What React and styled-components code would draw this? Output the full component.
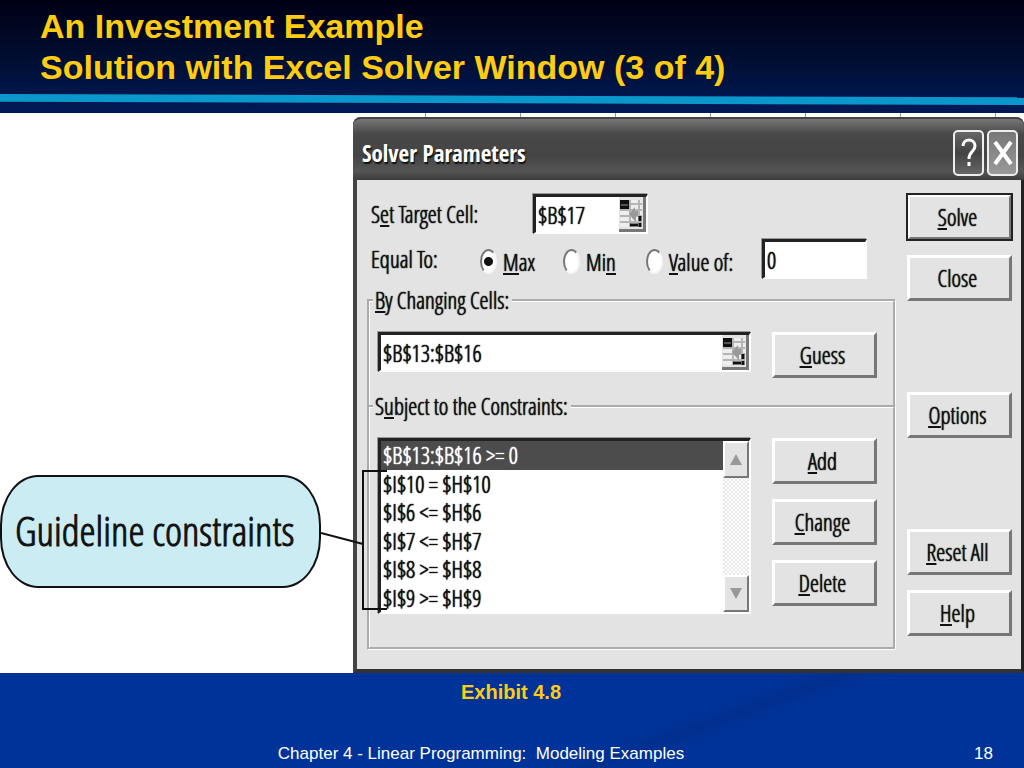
import styled, { createGlobalStyle, css } from "styled-components"
import { useState } from "react"

const narrow = `"Open Sans Condensed Light", "Arial Narrow", "Liberation Sans", sans-serif`
const narrowBold = `"Open Sans Condensed", "Arial Narrow", "Liberation Sans", sans-serif`
const face = "#e3e3e3"
const gold = "#ffcc11"

const GlobalStyle = createGlobalStyle`
    * {
        box-sizing: border-box;
    }
    body {
        margin: 0;
        background-color: #003399;
        font-family: "Liberation Sans", Arial, sans-serif;
    }
`
const Slide = styled.div`
    min-height: 100vh;
    display: flex;
    flex-direction: column;
    background: linear-gradient(160deg, transparent 62%, #002f8e 66%, transparent 70%) bottom / 100% 95px no-repeat, #003399;
`
const Header = styled.header`
    display: flex;
    flex-direction: column;
    height: 113px;
    padding-top: 6px;
    background: linear-gradient(#000014, #000c2c 45%, #001a58);
`
const Title = styled.h1`
    flex: 1;
    margin: 0;
    padding-left: 40px;
    font-size: 34px;
    line-height: 41px;
    font-weight: 700;
    color: ${gold};
`
const Stripe = styled.div`
    height: 11px;
    margin-bottom: 8px;
    background-color: #0a98cc;
    clip-path: polygon(0 0, 100% 30%, 100% 100%, 0 70%);
`
const Figure = styled.main`
    display: grid;
    grid-template-columns: minmax(0, 353fr) minmax(0, 671fr);
    background-color: white;
`
const Notes = styled.div`
    padding: 362px 32px 0 0;
`
const Callout = styled.div`
    height: 113px;
    display: flex;
    align-items: center;
    padding: 0 0 4px 13px;
    border: 2px solid #111;
    border-radius: 38px / 50px;
    background-color: #cbecf3;
    font-family: ${narrow};
    font-size: 41px;
    white-space: nowrap;
    color: #111;
    -webkit-text-stroke: 1px #111;
`
const SheetEdge = styled.div`
    padding-top: 4px;
    background: repeating-linear-gradient(90deg, #fff 0 72px, #99a 72px 73px, #fff 73px 95px) 0 0 / 100% 4px no-repeat;
`
const Dialog = styled.section`
    position: relative;
    height: 556px;
    display: flex;
    flex-direction: column;
    border: solid #444;
    border-width: 0 3px 4px 4px;
    border-right-color: #222;
    border-bottom-color: #333;
    border-radius: 8px 8px 0 0;
    background-color: ${face};
    font-family: ${narrow};
    font-size: 23px;
    color: #111;
    text-shadow: 0 0 1px currentColor, 0 0 1px currentColor;
`
const TitleBar = styled.div`
    height: 63px;
    margin: 0 -3px 0 -4px;
    padding: 6px 6px 0 9px;
    display: flex;
    align-items: center;
    gap: 3px;
    border-top: 2px solid #444;
    border-radius: 8px 8px 0 0;
    background: linear-gradient(#777, #484848 25%, #444 60%, #555 85%, #3c3c3c);
`
const DialogTitle = styled.h2`
    flex: 1;
    margin: 0;
    font-family: ${narrowBold};
    font-size: 23px;
    font-weight: 700;
    color: white;
    text-shadow: 1px 2px 1px #111;
`
const CaptionButton = styled.button`
    width: 31px;
    height: 46px;
    padding: 0;
    display: flex;
    align-items: center;
    justify-content: center;
    border: 2px solid #eee;
    border-radius: 5px;
    background: ${props => props.$light ? "linear-gradient(#777, #999)" : "linear-gradient(#666, #444 50%, #666)"};
`
const Body = styled.div`
    flex: 1;
    display: grid;
    grid-template-columns: minmax(0, 1fr) 105px;
    gap: 11px;
    padding: 14px 9px 0 10px;
`
const Main = styled.div`
    display: flex;
    flex-direction: column;
`
const Side = styled.div`
    display: flex;
    flex-direction: column;
    gap: 15px;
`
const Row = styled.div`
    display: flex;
    align-items: center;
    height: 40px;
    padding-left: 4px;
    margin-bottom: ${props => props.$gap || "0"};
`
const Caption = styled.label`
    width: ${props => props.$width || "auto"};
    white-space: nowrap;
`
const sunken = css`
    border: solid;
    border-width: 3px 2px 2px 3px;
    border-color: #222 white white #222;
    background-color: white;
    box-shadow: -1px -1px 0 #999;
`
const Field = styled.div`
    ${sunken}
    display: flex;
    height: 40px;
    width: ${props => props.$width || "auto"};
`
const FieldInput = styled.input`
    flex: 1;
    min-width: 0;
    padding: 0 2px;
    border: 0;
    background: none;
    font: inherit;
    color: inherit;
    text-shadow: inherit;
`
const PickButton = styled.button`
    width: 27px;
    padding: 0;
    border: solid;
    border-width: 0 3px 3px 0;
    border-color: #777;
    background-color: ${face};

    svg {
        display: block;
        width: 100%;
        height: 100%;
    }
`
const Choice = styled.label`
    display: flex;
    align-items: center;
    gap: 6px;
    width: ${props => props.$width};
    padding-top: 5px;
    white-space: nowrap;
`
const Radio = styled.input`
    appearance: none;
    flex: none;
    width: 17px;
    height: 25px;
    margin: 0;
    border: 2px solid;
    border-color: #777 #f6f6f6 #f6f6f6 #777;
    border-radius: 50%;
    background: ${props => props.checked ? "radial-gradient(circle, #111 0 4px, white 5px)" : "white"};
`
const Group = styled.fieldset`
    min-width: 0;
    height: ${props => props.$height};
    margin: ${props => props.$joined ? "-13px 0 0" : "0"};
    padding: 19px 16px 0 8px;
    border: 3px groove #fff;
    border-bottom-width: ${props => props.$open ? "0" : "3px"};
`
const Legend = styled.legend`
    margin-left: -5px;
    padding: 0 3px 0 2px;
    line-height: 26px;
`
const Columns = styled.div`
    display: grid;
    grid-template-columns: minmax(0, 1fr) 105px;
    gap: 21px;
    align-items: start;
`
const Stack = styled.div`
    display: flex;
    flex-direction: column;
    gap: 15px;
`
const Push = styled.button`
    height: 46px;
    width: 100%;
    padding: 0 4px 0 0;
    border: 3px solid;
    border-color: white #777 #777 white;
    background-color: ${face};
    outline: ${props => props.$primary ? "2px solid #222" : "0"};
    outline-offset: -1px;
    font: inherit;
    color: inherit;
    text-shadow: inherit;
    margin-bottom: ${props => props.$after || "0"};
`
const ListFrame = styled.div`
    ${sunken}
    display: flex;
    height: 176px;
`
const List = styled.ul`
    flex: 1;
    display: flex;
    flex-direction: column;
    margin: 0;
    padding: 0;
    list-style: none;
`
const Item = styled.li`
    flex: 1;
    padding-left: 2px;
    line-height: 28px;
    background-color: ${props => props.$active ? "#4c4c4c" : "transparent"};
    color: ${props => props.$active ? "white" : "inherit"};
    text-shadow: 0 0 1px currentColor, 0 0 1px currentColor;
`
const Scroll = styled.div`
    width: 26px;
    display: flex;
    flex-direction: column;
    justify-content: space-between;
    background: repeating-conic-gradient(#e8e8e8 0 25%, #fff 0 50%) 0 0 / 4px 4px;
`
const Arrow = styled.button`
    height: 37px;
    padding: 0;
    border: 2px solid;
    border-color: white #777 #777 white;
    background-color: ${face};

    svg {
        display: block;
        margin: auto;
    }
`
const Bracket = styled.svg`
    position: absolute;
    left: -36px;
    top: 351px;
    pointer-events: none;
`
const Exhibit = styled.p`
    flex: 1;
    margin: 0;
    padding: 8px 2px 0 0;
    text-align: center;
    font-size: 20px;
    line-height: 23px;
    font-weight: 700;
    color: ${gold};
`
const Footer = styled.footer`
    display: grid;
    grid-template-columns: 1fr auto 1fr;
    padding: 0 31px 4px;
    font-size: 17px;
    line-height: 21px;
    color: white;
    white-space: pre;
`
const PageNumber = styled.span`
    grid-column: 3;
    text-align: right;
`
const Chapter = styled.span`
    grid-column: 2;
    padding-right: 62px;
`

const constraints = [
    "$B$13:$B$16 >= 0",
    "$I$10 = $H$10",
    "$I$6 <= $H$6",
    "$I$7 <= $H$7",
    "$I$8 >= $H$8",
    "$I$9 >= $H$9",
]

const PickIcon = () => (
    <svg viewBox="0 0 24 32" preserveAspectRatio="none" aria-hidden="true">
        <path d="M1 3h22v27H1z" fill="#eee" />
        <path d="M1 13h22M1 19h22M1 25h22M10 7h13M11 3v27M20 3v27" stroke="#b5b5b5" strokeWidth="2" />
        <path d="M1 3h9v9H1z" fill="#111" />
        <path d="M2 8h7" stroke="#999" strokeWidth="1" />
        <path d="M10 17l6-7v4h3v5h-2v6l-3-3z" fill="#999" />
        <path d="M11 28h8M21 19v5M21 26v4" stroke="#111" strokeWidth="3" />
    </svg>
)

const App = () => {
    const [target, setTarget] = useState("$B$17")
    const [cells, setCells] = useState("$B$13:$B$16")
    const [value, setValue] = useState("0")
    const [goal, setGoal] = useState("max")
    const [active, setActive] = useState(0)

    return (
        <Slide>
            <GlobalStyle />
            <Header>
                <Title>An Investment Example<br />Solution with Excel Solver Window (3 of 4)</Title>
                <Stripe />
            </Header>
            <Figure>
                <Notes>
                    <Callout>Guideline constraints</Callout>
                </Notes>
                <SheetEdge>
                    <Dialog aria-label="Solver Parameters">
                        <TitleBar>
                            <DialogTitle>Solver Parameters</DialogTitle>
                            <CaptionButton aria-label="Help">
                                <svg width="18" height="32" viewBox="0 0 18 32" fill="none" stroke="#fff" strokeWidth="3">
                                    <path d="M3 9C3 1 15 1 15 9C15 15 9 14 9 22M9 25v4" />
                                </svg>
                            </CaptionButton>
                            <CaptionButton $light aria-label="Close window">
                                <svg width="20" height="30" viewBox="0 0 20 30" fill="none" stroke="#fff" strokeWidth="4">
                                    <path d="M2 4L18 26M18 4L2 26" />
                                </svg>
                            </CaptionButton>
                        </TitleBar>
                        <Body>
                            <Main>
                                <Row $gap="5px">
                                    <Caption htmlFor="target" $width="162px">S<u>e</u>t Target Cell:</Caption>
                                    <Field $width="115px">
                                        <FieldInput id="target" value={target} onChange={(e) => setTarget(e.target.value)} />
                                        <PickButton aria-label="Pick target cell"><PickIcon /></PickButton>
                                    </Field>
                                </Row>
                                <Row $gap="8px">
                                    <Caption as="span" $width="109px">Equal To:</Caption>
                                    <Choice $width="83px">
                                        <Radio type="radio" name="goal" checked={goal === "max"} onChange={() => setGoal("max")} />
                                        <span><u>M</u>ax</span>
                                    </Choice>
                                    <Choice $width="83px">
                                        <Radio type="radio" name="goal" checked={goal === "min"} onChange={() => setGoal("min")} />
                                        <span>Mi<u>n</u></span>
                                    </Choice>
                                    <Choice $width="116px">
                                        <Radio type="radio" name="goal" checked={goal === "value"} onChange={() => setGoal("value")} />
                                        <span><u>V</u>alue of:</span>
                                    </Choice>
                                    <Field $width="105px">
                                        <FieldInput aria-label="Value" value={value} onChange={(e) => setValue(e.target.value)} />
                                    </Field>
                                </Row>
                                <Group $open $height="119px">
                                    <Legend><u>B</u>y Changing Cells:</Legend>
                                    <Columns>
                                        <Field>
                                            <FieldInput aria-label="By Changing Cells" value={cells} onChange={(e) => setCells(e.target.value)} />
                                            <PickButton aria-label="Pick changing cells"><PickIcon /></PickButton>
                                        </Field>
                                        <Push><u>G</u>uess</Push>
                                    </Columns>
                                </Group>
                                <Group $joined $height="257px">
                                    <Legend>S<u>u</u>bject to the Constraints:</Legend>
                                    <Columns>
                                        <ListFrame>
                                            <List role="listbox" aria-label="Constraints">
                                                {constraints.map((item, i) => (
                                                    <Item key={item} role="option" aria-selected={i === active} $active={i === active} onClick={() => setActive(i)}>{item}</Item>
                                                ))}
                                            </List>
                                            <Scroll>
                                                <Arrow aria-label="Scroll up">
                                                    <svg width="12" height="11"><path d="M6 0l6 11H0z" fill="#999" /></svg>
                                                </Arrow>
                                                <Arrow aria-label="Scroll down">
                                                    <svg width="12" height="11"><path d="M0 0h12L6 11z" fill="#999" /></svg>
                                                </Arrow>
                                            </Scroll>
                                        </ListFrame>
                                        <Stack>
                                            <Push><u>A</u>dd</Push>
                                            <Push><u>C</u>hange</Push>
                                            <Push><u>D</u>elete</Push>
                                        </Stack>
                                    </Columns>
                                </Group>
                            </Main>
                            <Side>
                                <Push $primary><u>S</u>olve</Push>
                                <Push $after="76px">Close</Push>
                                <Push $after="76px"><u>O</u>ptions</Push>
                                <Push><u>R</u>eset All</Push>
                                <Push><u>H</u>elp</Push>
                            </Side>
                        </Body>
                        <Bracket width="68" height="144" fill="none" stroke="#111" strokeWidth="2" aria-hidden="true">
                            <path d="M0 65L42 76M66 3H42V141H66" />
                        </Bracket>
                    </Dialog>
                </SheetEdge>
            </Figure>
            <Exhibit>Exhibit 4.8</Exhibit>
            <Footer>
                <Chapter>Chapter 4 - Linear Programming:  Modeling Examples</Chapter>
                <PageNumber>18</PageNumber>
            </Footer>
        </Slide>
    )
}

export default App
